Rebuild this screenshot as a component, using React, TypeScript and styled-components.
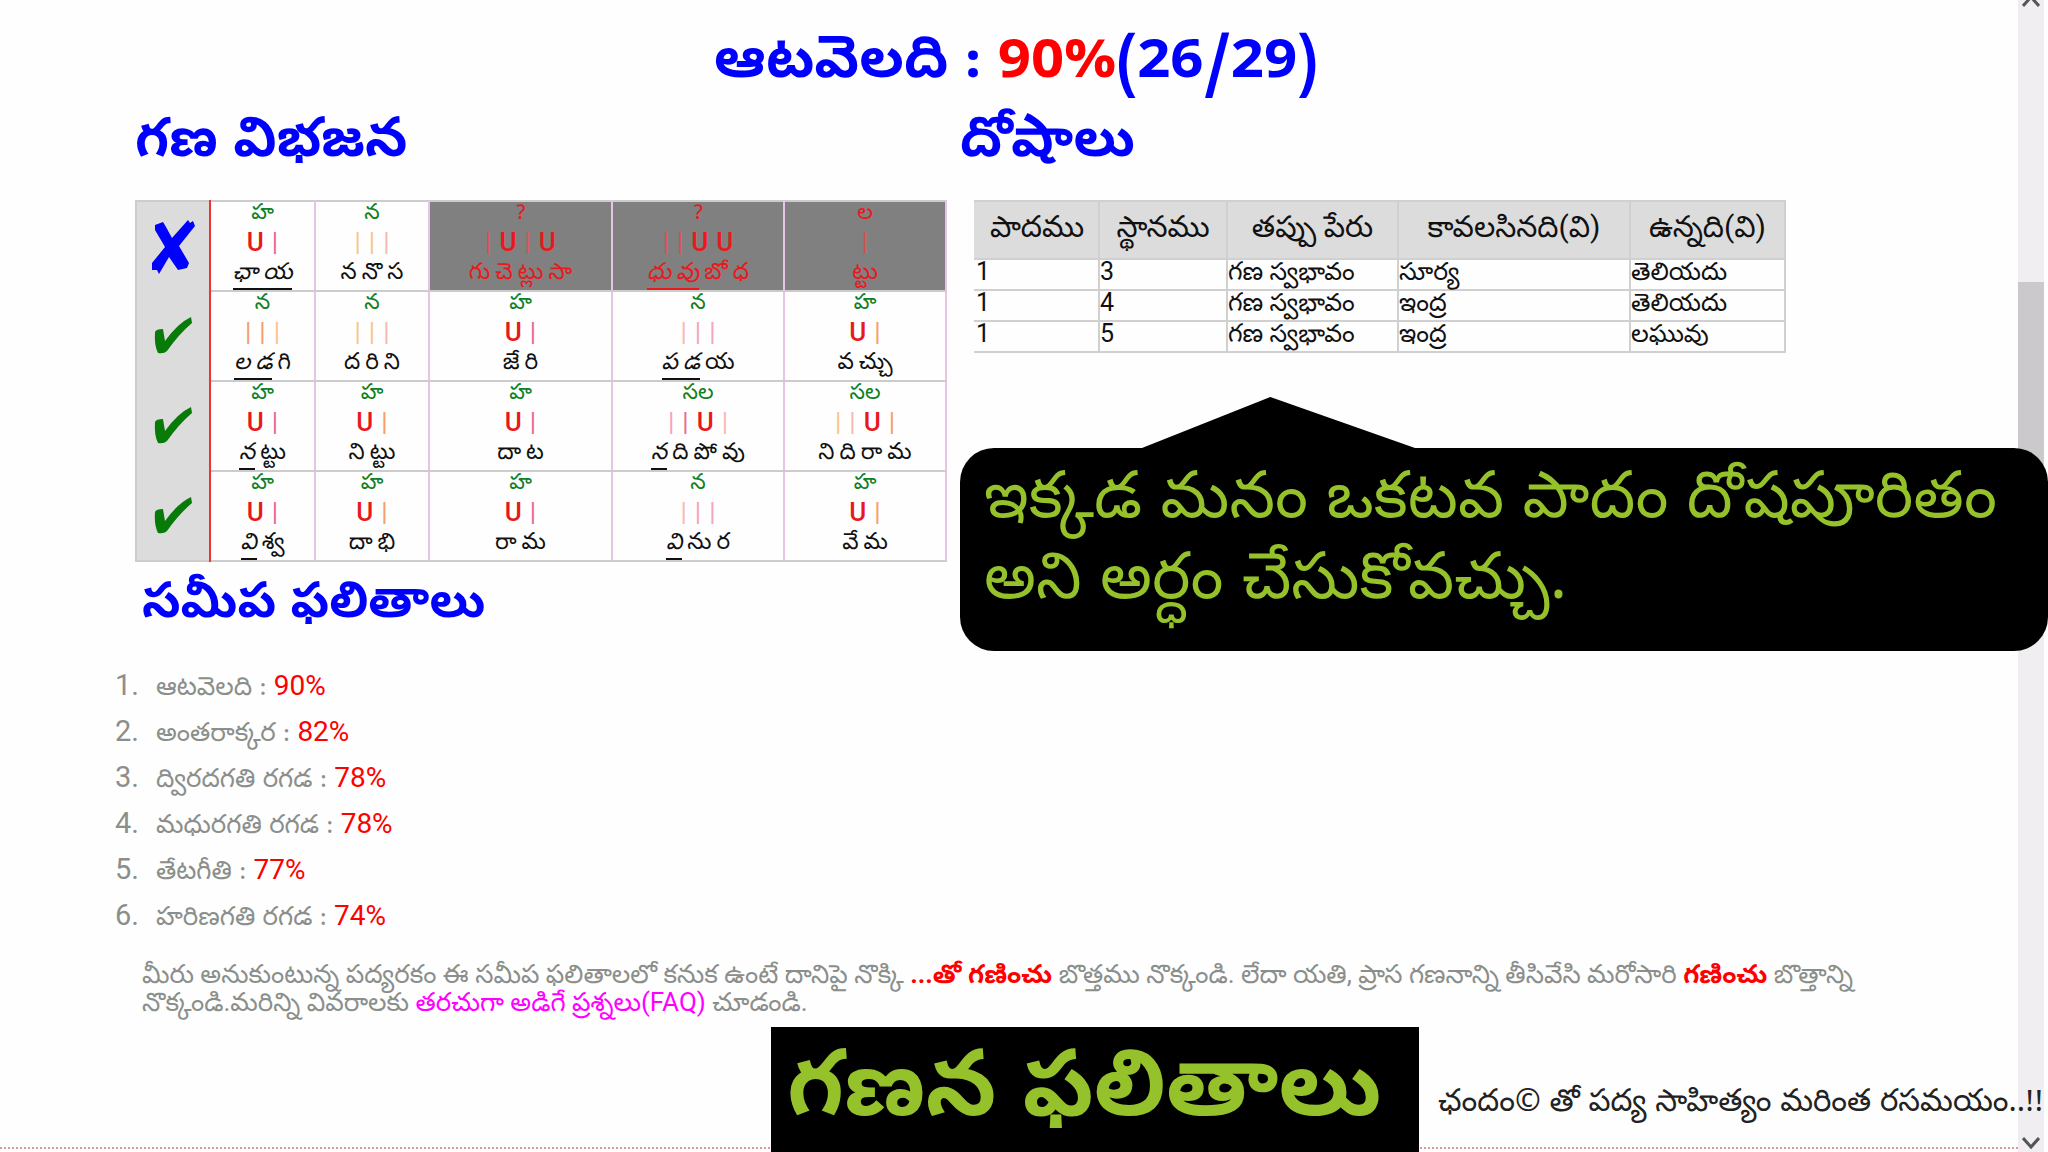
import React from "react";
import styled, { createGlobalStyle } from "styled-components";

const telugu = `"Noto Sans Telugu", "Lohit Telugu", "Mandali", "Liberation Sans", "DejaVu Sans", sans-serif`;
const mixed = `Roboto, ${telugu}`;

const GlobalStyle = createGlobalStyle`
  * { box-sizing: border-box; }
  body { margin: 0; background: #fefefe; font-family: ${telugu}; color: #111; }
`;

const Screen = styled.div`
  position: relative;
  display: flex;
  min-height: 100vh;
  overflow: hidden;
`;

const Page = styled.main`
  flex: 1;
  min-width: 0;
  display: flex;
  flex-direction: column;
`;

const Title = styled.h1`
  margin: 0;
  padding: 30px 0 0 14px;
  font-size: 58px;
  line-height: 72px;
  font-weight: 700;
  text-align: center;
  color: #00f;
`;

const Percent = styled.span`
  color: #f00;
`;

const Columns = styled.div`
  display: grid;
  grid-template-columns: 825fr 1058fr;
  padding-left: 135px;
`;

const Column = styled.section`
  min-width: 0;
`;

const Heading = styled.h2<{ $size: number }>`
  margin: 0;
  padding-top: 2px;
  font-size: ${(p) => p.$size}px;
  line-height: 84px;
  font-weight: 700;
  color: #00f;
`;

const Col = styled.col<{ $w: number }>`
  width: ${(p) => p.$w}px;
`;

const GanaTable = styled.table`
  width: 810px;
  margin-top: 12px;
  table-layout: fixed;
  border-collapse: collapse;
  border: 2px solid #ccc;
`;

const StatusCell = styled.th`
  padding: 0;
  background: #dcdcdc;
  border-right: 2px solid #e33;
  vertical-align: middle;

  svg { display: block; margin: 0 auto; }
`;

const GanaCell = styled.td<{ $bad?: boolean }>`
  height: 90px;
  padding: 0;
  border: 2px solid #ccc;
  border-left-color: #e6c4e6;
  border-right-color: #e6c4e6;
  background: ${(p) => (p.$bad ? "#808080" : "#fefefe")};
  color: ${(p) => (p.$bad ? "#e8191c" : "#111")};
  text-align: center;
  vertical-align: top;
`;

const GanaName = styled.div<{ $bad?: boolean }>`
  font-size: 22px;
  line-height: 26px;
  color: ${(p) => (p.$bad ? "#e8191c" : "#118022")};
`;

const Marks = styled.div`
  display: flex;
  justify-content: center;
  gap: 8px;
  height: 34px;
  font-family: ${mixed};
  font-size: 26px;
  font-weight: 500;
  line-height: 28px;
  color: #e8191c;
`;

const Laghu = styled.span<{ $tone: string }>`
  font-weight: 400;
  color: ${(p) => p.$tone};
`;

const Syllables = styled.div`
  display: flex;
  justify-content: center;
  gap: 5px;
  font-size: 23px;
  line-height: 26px;
`;

const Yati = styled.u`
  display: flex;
  gap: 5px;
  font-style: italic;
  text-decoration: none;
  border-bottom: 2px solid currentColor;
`;

const DoshaTable = styled.table`
  width: 811px;
  margin: 12px 0 0 14px;
  table-layout: fixed;
  border-collapse: collapse;
  font-family: ${mixed};
  font-size: 25px;

  th {
    height: 58px;
    padding: 0 0 6px;
    background: #dcdcdc;
    font-size: 30px;
    line-height: 40px;
    font-weight: 400;
  }
  td {
    height: 31px;
    padding: 0;
    line-height: 24px;
    vertical-align: top;
  }
  th, td {
    border: 2px solid #d0d0d0;
    white-space: nowrap;
  }
  th:first-child, td:first-child { border-left: 0; padding-left: 2px; }
`;

const Nearby = styled.section`
  padding: 2px 0 0 142px;
`;

const ResultList = styled.ol`
  margin: 14px 0 0 -27px;
  padding: 0;
  list-style: none;
  counter-reset: result;
`;

const Result = styled.li`
  display: flex;
  align-items: baseline;
  height: 46px;
  font-size: 26px;
  line-height: 42px;
  color: #8b8f8b;
  counter-increment: result;

  &::before {
    content: counter(result) ".";
    width: 41px;
    font-family: ${mixed};
    font-size: 29px;
  }
`;

const ResultLink = styled.a`
  color: inherit;
  text-decoration: none;
`;

const Score = styled(Percent)`
  font-family: ${mixed};
  font-size: 28px;
`;

const Note = styled.p`
  margin: 20px 160px 0 0;
  font-family: ${mixed};
  font-size: 26px;
  line-height: 28px;
  color: #8b8f8b;

  strong { color: #f00; }
  a { color: #f0f; text-decoration: none; }
`;

const Footer = styled.footer`
  margin-top: auto;
  height: 5px;
  border-top: 2px dotted #d99;
`;

const Scrollbar = styled.div`
  width: 26px;
  margin-right: 4px;
  display: flex;
  flex-direction: column;
  justify-content: space-between;
  align-items: center;
  background: #f0eef0;
`;

const Thumb = styled.div`
  width: 26px;
  height: 260px;
  margin: 275px 0 auto;
  background: #cbc9cb;
`;

const Callout = styled.aside`
  position: absolute;
  left: 960px;
  right: 0;
  top: 448px;
  height: 203px;
  padding: 16px 24px;
  border-radius: 34px;
  background: #000;
  color: #95c22b;
  font-size: 65px;
  line-height: 81px;
  white-space: nowrap;

  &::before {
    content: "";
    position: absolute;
    left: 182px;
    bottom: 100%;
    width: 273px;
    height: 51px;
    background: #000;
    clip-path: polygon(47% 0, 100% 100%, 0 100%);
  }
`;

const Banner = styled.div`
  position: absolute;
  left: 771px;
  bottom: 0;
  width: 648px;
  height: 125px;
  padding: 16px 0 0 16px;
  background: #000;
  color: #95c22b;
  font-size: 92px;
  line-height: 108px;
  font-weight: 700;
  white-space: nowrap;
`;

const Tagline = styled.div`
  position: absolute;
  left: 1438px;
  bottom: 27px;
  font-size: 31px;
  line-height: 40px;
  color: #222;
  white-space: nowrap;
`;

type Cell = { name: string; marks: string; tones?: string[]; yati?: string[]; rest: string[]; bad?: boolean };

const P = "#ec6a92";
const O = "#f5a06a";
const L = "#f9c58e";
const K = "#f8b9b4";

const rows: { ok: boolean; cells: Cell[] }[] = [
  { ok: false, cells: [
    { name: "హ", marks: "U|", tones: [P], yati: ["ఛా", "య"], rest: [] },
    { name: "న", marks: "|||", tones: [L, L, K], rest: ["న", "నొ", "స"] },
    { name: "?", marks: "|U|U", tones: ["#d9545c", "#d9545c"], rest: ["గు", "చె", "ట్లు", "సా"], bad: true },
    { name: "?", marks: "||UU", tones: ["#d9545c", "#d9545c"], yati: ["ధు", "వు"], rest: ["బో", "ధ"], bad: true },
    { name: "ల", marks: "|", tones: ["#e0504c"], rest: ["ట్టు"], bad: true },
  ] },
  { ok: true, cells: [
    { name: "న", marks: "|||", tones: [O, O, L], yati: ["ల", "డ"], rest: ["గి"] },
    { name: "న", marks: "|||", tones: [L, L, K], rest: ["ద", "రి", "ని"] },
    { name: "హ", marks: "U|", tones: [P], rest: ["జే", "రి"] },
    { name: "న", marks: "|||", tones: [K, "#f5a5bb", "#f5a5bb"], yati: ["ప", "డ"], rest: ["య"] },
    { name: "హ", marks: "U|", tones: [O], rest: ["వ", "చ్చు"] },
  ] },
  { ok: true, cells: [
    { name: "హ", marks: "U|", tones: [P], yati: ["న"], rest: ["ట్టు"] },
    { name: "హ", marks: "U|", tones: [O], rest: ["ని", "ట్టు"] },
    { name: "హ", marks: "U|", tones: [P], rest: ["దా", "ట"] },
    { name: "సల", marks: "||U|", tones: ["#f5a5bb", P, K], yati: ["న"], rest: ["ది", "పో", "వు"] },
    { name: "సల", marks: "||U|", tones: [L, K, O], rest: ["ని", "ది", "రా", "మ"] },
  ] },
  { ok: true, cells: [
    { name: "హ", marks: "U|", tones: [P], yati: ["వి"], rest: ["శ్వ"] },
    { name: "హ", marks: "U|", tones: [O], rest: ["దా", "భి"] },
    { name: "హ", marks: "U|", tones: [P], rest: ["రా", "మ"] },
    { name: "న", marks: "|||", tones: [K, "#f5a5bb", "#f5a5bb"], yati: ["వి"], rest: ["ను", "ర"] },
    { name: "హ", marks: "U|", tones: [O], rest: ["వే", "మ"] },
  ] },
];

const doshas = [
  ["1", "3", "గణ స్వభావం", "సూర్య", "తెలియదు"],
  ["1", "4", "గణ స్వభావం", "ఇంద్ర", "తెలియదు"],
  ["1", "5", "గణ స్వభావం", "ఇంద్ర", "లఘువు"],
];

const results = [
  ["ఆటవెలది", "90%"],
  ["అంతరాక్కర", "82%"],
  ["ద్విరదగతి రగడ", "78%"],
  ["మధురగతి రగడ", "78%"],
  ["తేటగీతి", "77%"],
  ["హరిణగతి రగడ", "74%"],
];

const Cross = () => (
  <svg width="44" height="54" viewBox="0 0 44 54" aria-label="తప్పు">
    <path fill="#00f" d="M4 5 L12 2 L15 7 L21 18 L37 0 L39 3 L42 1 L44 6 L28 26 L38 43 L36 48 L27 50 L18 37 L8 54 L6 50 L1 50 L1 43 L14 27 L4 10 Z" />
  </svg>
);

const Tick = () => (
  <svg width="38" height="38" viewBox="0 0 38 38" aria-label="సరి">
    <path fill="#087a08" d="M1 15 Q2 12 9 12 L11 24 Q24 6 37 0 L38 6 Q25 17 13 34 Q10 37 4 36 Q0 28 1 15 Z" />
  </svg>
);

const GanaEntry = ({ cell }: { cell: Cell }) => {
  let tone = 0;
  return (
    <GanaCell $bad={cell.bad}>
      <GanaName $bad={cell.bad}>{cell.name}</GanaName>
      <Marks>
        {cell.marks.split("").map((m, i) =>
          m === "U" ? <span key={i}>U</span> : <Laghu key={i} $tone={cell.tones?.[tone++] ?? P}>|</Laghu>
        )}
      </Marks>
      <Syllables>
        {cell.yati && <Yati>{cell.yati.map((s) => <span key={s}>{s}</span>)}</Yati>}
        {cell.rest.map((s) => <span key={s}>{s}</span>)}
      </Syllables>
    </GanaCell>
  );
};

export default function App() {
  return (
    <>
      <GlobalStyle />
      <Screen>
        <Page>
          <Title>ఆటవెలది : <Percent>90%</Percent>(26/29)</Title>
          <Columns>
            <Column>
              <Heading $size={55}>గణ విభజన</Heading>
              <GanaTable>
                <colgroup>
                  {[74, 105, 114, 183, 172, 162].map((w) => <Col key={w} $w={w} />)}
                </colgroup>
                <tbody>
                  {rows.map((row, r) => (
                    <tr key={r}>
                      <StatusCell scope="row">{row.ok ? <Tick /> : <Cross />}</StatusCell>
                      {row.cells.map((cell, c) => <GanaEntry key={c} cell={cell} />)}
                    </tr>
                  ))}
                </tbody>
              </GanaTable>
            </Column>
            <Column>
              <Heading $size={55}>దోషాలు</Heading>
              <DoshaTable>
                <colgroup>
                  {[125, 128, 171, 232, 155].map((w) => <Col key={w} $w={w} />)}
                </colgroup>
                <thead>
                  <tr>
                    <th>పాదము</th><th>స్థానము</th><th>తప్పు పేరు</th><th>కావలసినది(వి)</th><th>ఉన్నది(వి)</th>
                  </tr>
                </thead>
                <tbody>
                  {doshas.map((row, r) => <tr key={r}>{row.map((v, c) => <td key={c}>{v}</td>)}</tr>)}
                </tbody>
              </DoshaTable>
            </Column>
          </Columns>
          <Nearby>
            <Heading $size={50}>సమీప ఫలితాలు</Heading>
            <ResultList>
              {results.map(([name, score]) => (
                <Result key={name}>
                  <ResultLink href="#">{name} : <Score>{score}</Score></ResultLink>
                </Result>
              ))}
            </ResultList>
            <Note>
              మీరు అనుకుంటున్న పద్యరకం ఈ సమీప ఫలితాలలో కనుక ఉంటే దానిపై నొక్కి <strong>...తో గణించు</strong> బొత్తము
              నొక్కండి. లేదా యతి, ప్రాస గణనాన్ని తీసివేసి మరోసారి <strong>గణించు</strong> బొత్తాన్ని నొక్కండి.మరిన్ని వివరాలకు{" "}
              <a href="#">తరచుగా అడిగే ప్రశ్నలు(FAQ)</a> చూడండి.
            </Note>
          </Nearby>
          <Footer />
        </Page>
        <Scrollbar>
          <svg width="18" height="7" viewBox="0 0 18 7"><path d="M1 6 L9 -3 L17 6" fill="none" stroke="#555" strokeWidth="3" /></svg>
          <Thumb />
          <svg width="18" height="16" viewBox="0 0 18 16"><path d="M1 2 L9 11 L17 2" fill="none" stroke="#555" strokeWidth="3" /></svg>
        </Scrollbar>
        <Callout>ఇక్కడ మనం ఒకటవ పాదం దోషపూరితం<br />అని అర్ధం చేసుకోవచ్చు.</Callout>
        <Banner>గణన ఫలితాలు</Banner>
        <Tagline>ఛందం© తో పద్య సాహిత్యం మరింత రసమయం..!!</Tagline>
      </Screen>
    </>
  );
}
